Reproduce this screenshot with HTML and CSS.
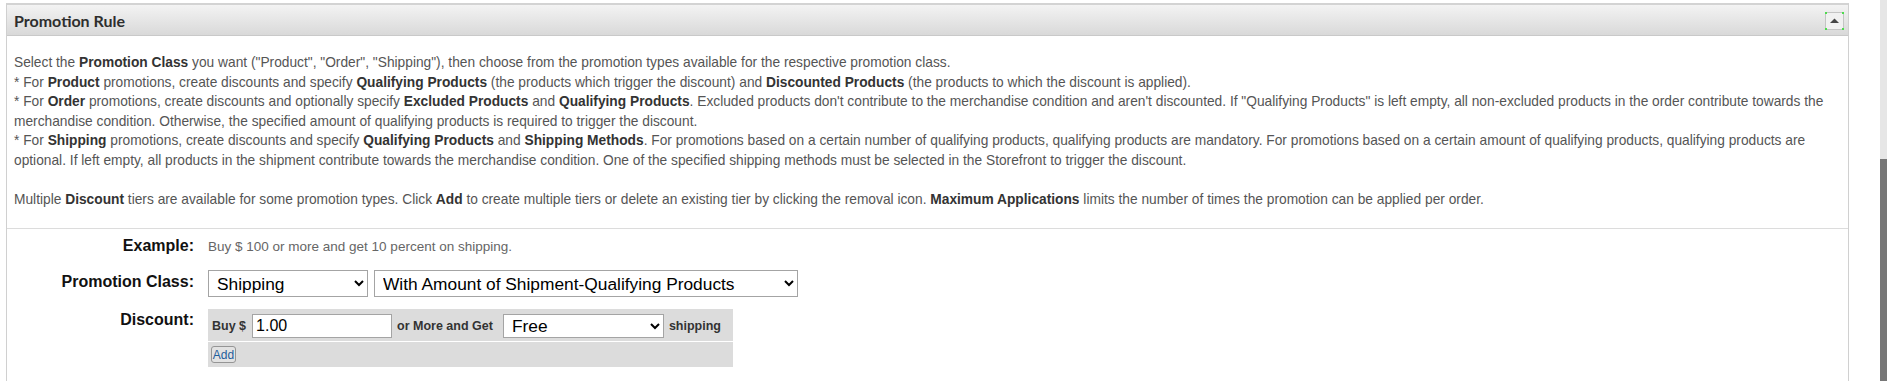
FILE: index.html
```html
<!DOCTYPE html>
<html lang="en">
<head>
    <meta charset="UTF-8">
    <title>Promotion Rule</title>
    <link rel="stylesheet" href="styles.css">
</head>
<body>
    <div class="panel">
        <div class="panel-header">
            <span class="panel-title">Promotion Rule</span>
            <button class="collapse-button" title="Collapse">
                <svg width="19" height="18" viewBox="0 0 19 18">
                    <rect x="0.5" y="0.5" width="18" height="17" fill="#f1f1f1" stroke="#c4c4c4"/>
                    <rect x="0" y="0" width="2" height="2" fill="#4ddc4d"/>
                    <rect x="17" y="0" width="2" height="2" fill="#4ddc4d"/>
                    <rect x="0" y="16" width="2" height="2" fill="#4ddc4d"/>
                    <rect x="17" y="16" width="2" height="2" fill="#4ddc4d"/>
                    <path d="M5 11 L9.5 6.5 L14 11 Z" fill="#454545"/>
                </svg>
            </button>
        </div>

        <div class="help">
            Select the <b>Promotion Class</b> you want ("Product", "Order", "Shipping"), then choose from the promotion types available for the respective promotion class.<br>
            * For <b>Product</b> promotions, create discounts and specify <b>Qualifying Products</b> (the products which trigger the discount) and <b>Discounted Products</b> (the products to which the discount is applied).<br>
            * For <b>Order</b> promotions, create discounts and optionally specify <b>Excluded Products</b> and <b>Qualifying Products</b>. Excluded products don't contribute to the merchandise condition and aren't discounted. If "Qualifying Products" is left empty, all non-excluded products in the order contribute towards the merchandise condition. Otherwise, the specified amount of qualifying products is required to trigger the discount.<br>
            * For <b>Shipping</b> promotions, create discounts and specify <b>Qualifying Products</b> and <b>Shipping Methods</b>. For promotions based on a certain number of qualifying products, qualifying products are mandatory. For promotions based on a certain amount of qualifying products, qualifying products are optional. If left empty, all products in the shipment contribute towards the merchandise condition. One of the specified shipping methods must be selected in the Storefront to trigger the discount.<br>
            <br>
            Multiple <b>Discount</b> tiers are available for some promotion types. Click <b>Add</b> to create multiple tiers or delete an existing tier by clicking the removal icon. <b>Maximum Applications</b> limits the number of times the promotion can be applied per order.
        </div>

        <div class="form">
            <div class="row row-example">
                <label class="label">Example:</label>
                <span class="example-text">Buy $ 100 or more and get 10 percent on shipping.</span>
            </div>

            <div class="row row-class">
                <label class="label">Promotion Class:</label>
                <select class="select select-class">
                    <option>Product</option>
                    <option>Order</option>
                    <option selected>Shipping</option>
                </select>
                <select class="select select-type">
                    <option>With Number of Shipment-Qualifying Products</option>
                    <option selected>With Amount of Shipment-Qualifying Products</option>
                </select>
            </div>

            <div class="row row-discount">
                <label class="label">Discount:</label>
                <div class="tiers">
                    <div class="tier">
                        <span class="tier-text">Buy $</span>
                        <input class="amount" type="text" value="1.00">
                        <span class="tier-text">or More and Get</span>
                        <select class="select select-free">
                            <option selected>Free</option>
                            <option>Percent off</option>
                            <option>Amount off</option>
                        </select>
                        <span class="tier-text">shipping</span>
                    </div>
                    <div class="tier-actions">
                        <button class="add-button">Add</button>
                    </div>
                </div>
            </div>
        </div>
    </div>

    <div class="scrollbar">
        <div class="scrollbar-track"></div>
        <div class="scrollbar-thumb"></div>
    </div>
</body>
</html>
```

FILE: styles.css
```css
body {
    margin: 0;
    height: 381px;
    overflow: hidden;
    display: flex;
    background: #fff;
    font-family: "Liberation Sans", Arial, sans-serif;
}
.panel {
    margin: 3px 0 0 6px;
    width: 1841px;
    border-left: 1px solid #d0d0d0;
    border-right: 1px solid #d0d0d0;
    border-top: 2px solid #d3d3d3;
}
.panel-header {
    height: 30px;
    display: flex;
    align-items: center;
    justify-content: space-between;
    padding: 0 4px 0 7px;
    background: linear-gradient(#f3f3f3, #d9d9d9);
    border-bottom: 1px solid #c9c9c9;
}
.panel-title {
    font-family: Lato, "Liberation Sans", sans-serif;
    font-weight: bold;
    font-size: 16px;
    color: #2e2e2e;
}
.collapse-button {
    border: none;
    background: none;
    padding: 0;
    margin-top: 2px;
    width: 19px;
    height: 18px;
    display: block;
}
.collapse-button svg {
    display: block;
}
.help {
    padding: 17px 8px 19px 7px;
    font-size: 13.75px;
    line-height: 19.5px;
    color: #555;
    border-bottom: 1px solid #dcdcdc;
}
.help b {
    color: #333;
}
.form {
    padding-top: 8px;
}
.row {
    display: flex;
    align-items: flex-start;
}
.label {
    width: 187px;
    margin-right: 14px;
    text-align: right;
    font-size: 16px;
    line-height: 18px;
    font-weight: bold;
    color: #111;
}
.row-example {
    align-items: baseline;
}
.example-text {
    font-size: 13.5px;
    color: #666;
}
.row-class {
    margin-top: 15px;
}
.row-class .label {
    padding-top: 3px;
}
.row-discount {
    margin-top: 12px;
}
.row-discount .label {
    padding-top: 2px;
}
.select {
    font-family: "Liberation Sans", Arial, sans-serif;
    font-size: 17.33px;
    color: #000;
    background: #fff;
    border: 1px solid #a4a4a4;
    border-radius: 0;
    padding: 0 2px 0 4px;
}
.select-class {
    width: 160px;
    height: 27px;
    margin-right: 6px;
}
.select-type {
    width: 424px;
    height: 27px;
}
.tiers {
    width: 525px;
    background: #dcdcdc;
}
.tier {
    display: flex;
    align-items: center;
    gap: 5px;
    padding: 5px 4px 3px 4px;
    border-bottom: 1px solid #fff;
}
.tier-text {
    font-size: 12.5px;
    font-weight: bold;
    color: #333;
}
.amount {
    width: 140px;
    height: 24px;
    box-sizing: border-box;
    border: 1px solid #a4a4a4;
    padding: 0 3px;
    font-family: "Liberation Sans", Arial, sans-serif;
    font-size: 16px;
    margin-left: 1px;
}
.select-free {
    width: 161px;
    height: 24px;
    margin-left: 5px;
}
.tier-actions {
    padding: 4px 3px 4px 3px;
}
.add-button {
    display: block;
    height: 17px;
    width: 25px;
    padding: 0;
    border: 1px solid #959595;
    border-radius: 3px;
    background: #e2e2e2;
    color: #1f5d9c;
    font-family: "Liberation Sans", Arial, sans-serif;
    font-size: 12px;
    cursor: pointer;
}
.scrollbar {
    margin-left: auto;
    width: 7px;
    display: flex;
    flex-direction: column;
}
.scrollbar-track {
    height: 159px;
    background: #e6e6e6;
}
.scrollbar-thumb {
    flex: 1;
    background: #777;
}
```
